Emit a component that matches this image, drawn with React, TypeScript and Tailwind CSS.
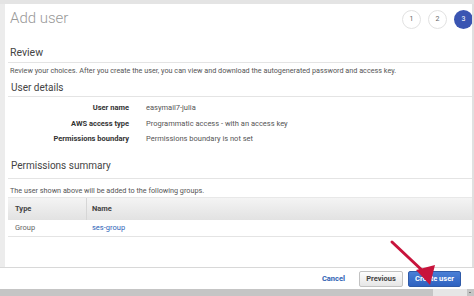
import React from "react";

const font = { fontFamily: "Roboto, 'Noto Sans', Arial, sans-serif" };

function Step({ n, active }: { n: number; active?: boolean }) {
  return active ? (
    <div className="w-[19px] h-[19px] rounded-full bg-[#3a55b2] text-white text-[7px] flex items-center justify-center">{n}</div>
  ) : (
    <div className="w-[19px] h-[19px] rounded-full border border-[#e2e2e2] bg-white text-[#666] text-[7px] flex items-center justify-center">{n}</div>
  );
}

function Row({ label, value }: { label: string; value: string }) {
  return (
    <div className="flex items-center h-[15.5px]">
      <div className="w-[121px] text-right font-bold text-[#333] text-[7.5px]">{label}</div>
      <div className="ml-[17px] text-[#555] text-[7.5px]">{value}</div>
    </div>
  );
}

export default function App() {
  return (
    <div style={font} className="w-[474px] h-[296px] bg-[#e4e4e4] flex flex-col overflow-hidden relative">
      <div className="h-[4px] shrink-0" />
      <div className="flex flex-1 min-h-0">
        <div className="w-[5px] shrink-0 bg-[#ececec]" />
        <div className="flex-1 bg-white flex flex-col">
          {/* header */}
          <div className="h-[36px] flex items-start justify-between shrink-0">
            <div className="ml-[5px] mt-[3px] text-[15px] font-light text-[#999] leading-[22px]">Add user</div>
            <div className="flex gap-[7px] mt-[6px] mr-[-1px]">
              <Step n={1} />
              <Step n={2} />
              <Step n={3} active />
            </div>
          </div>
          <div className="ml-[3px] flex flex-col">
            <div className="border-b border-[#e4e4e4] h-[23px] flex items-end pb-[4px]">
              <span className="ml-[2px] text-[10.5px] text-[#444] leading-none">Review</span>
            </div>
            <div className="ml-[2px] mt-[3px] text-[7.25px] text-[#555] leading-[9px]">
              Review your choices. After you create the user, you can view and download the autogenerated password and access key.
            </div>
            <div className="border-b border-[#e4e4e4] h-[22px] flex items-end pb-[3px]">
              <span className="ml-[3px] text-[10px] text-[#444] leading-none">User details</span>
            </div>
            <div className="mt-[3px] flex flex-col">
              <Row label="User name" value="easymail7-julia" />
              <Row label="AWS access type" value="Programmatic access - with an access key" />
              <Row label="Permissions boundary" value="Permissions boundary is not set" />
            </div>
            <div className="border-b border-[#e4e4e4] h-[32px] flex items-end pb-[7px]">
              <span className="ml-[3px] text-[10px] text-[#444] leading-none">Permissions summary</span>
            </div>
            <div className="ml-[2px] mt-[7px] text-[7.25px] text-[#555] leading-[9px]">
              The user shown above will be added to the following groups.
            </div>
            <div className="mt-[2px] flex flex-col">
              <div className="h-[23px] flex items-center border-t border-[#e8e8e8] bg-gradient-to-b from-[#f4f4f4] to-[#e2e2e2]">
                <div className="w-[79px] h-full flex items-center pl-[7px] border-r border-[#d6d6d6] text-[7.5px] font-bold text-[#444]">Type</div>
                <div className="pl-[5px] text-[7.5px] font-bold text-[#444]">Name</div>
              </div>
              <div className="h-[17px] flex items-center border-b border-[#e4e4e4]">
                <div className="w-[79px] pl-[7px] text-[7.5px] text-[#666]">Group</div>
                <div className="pl-[5px] text-[7.5px] text-[#2e64b8]">ses-group</div>
              </div>
            </div>
          </div>
          <div className="flex-1" />
        </div>
        <div className="w-[2px] shrink-0 bg-[#e0e0e0]" />
      </div>
      {/* footer */}
      <div className="h-[22px] shrink-0 bg-white border-t border-[#d8d8d8] flex items-center justify-end">
        <span className="text-[7.5px] font-bold text-[#2e5fb3] mr-[14px]">Cancel</span>
        <div className="h-[16px] w-[44px] rounded-[2px] border border-[#c2c2c2] bg-gradient-to-b from-[#fdfdfd] to-[#e6e6e6] flex items-center justify-center text-[7.5px] font-bold text-[#444]">Previous</div>
        <div className="ml-[5px] mr-[13px] h-[16px] w-[53px] rounded-[2px] border border-[#2f5aa8] bg-gradient-to-b from-[#4a7fd6] to-[#2f62c0] flex items-center justify-center text-[7.5px] font-bold text-white">Create user</div>
      </div>
      <div className="h-[7px] shrink-0 bg-[#c5c5c5] flex">
        <div className="ml-[433px] w-[34px] h-full bg-[#e6e6e6]" />
        <div className="ml-[2px] mt-[3px] w-[2px] h-[1px] bg-[#777]" />
      </div>
      <svg className="absolute left-0 top-0 pointer-events-none" width="474" height="296" viewBox="0 0 474 296">
        <line x1="392" y1="242" x2="425" y2="273" stroke="#c8143c" strokeWidth="3" strokeLinecap="round" />
        <polygon points="416,270 435,265 430,285" fill="#c8143c" />
      </svg>
    </div>
  );
}
